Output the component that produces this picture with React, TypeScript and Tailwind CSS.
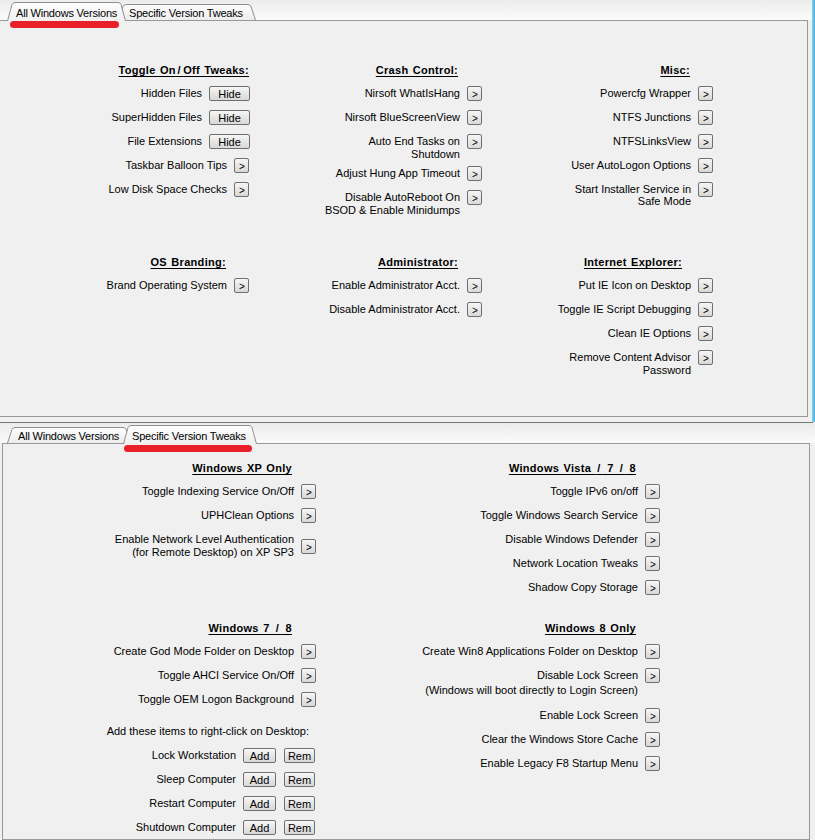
import type { ReactNode } from "react";

type Btn = "arrow" | "hide" | "addrem" | "none";

interface Item {
  lines: string[];
  btn: Btn;
  h?: string;
  lead?: string;
  textPt?: string;
  btnPt?: string;
  mr?: string;
}

const FONT = "font-['Liberation_Sans',Arial,sans-serif]";

const btnBase =
  "shrink-0 h-[15px] rounded-[2px] border border-[#707070] bg-linear-to-b from-[#f6f6f6] to-[#d8d8d8] text-[11px] leading-[13px] text-black p-0";

function ArrowBtn() {
  return (
    <button className={`${btnBase} w-[15px] flex items-center justify-center`}>
      <span className="text-[10px] leading-none pt-[2px] pl-px">&gt;</span>
    </button>
  );
}

function TextBtn({ label, w }: { label: string; w: string }) {
  return <button className={`${btnBase} ${w} pt-px`}>{label}</button>;
}

function Row({ item }: { item: Item }) {
  const { lines, btn, h = "h-[24px]", lead = "leading-[13px]", textPt = "pt-[5px]", btnPt = "pt-[4px]", mr = "" } = item;
  return (
    <div className={`flex justify-end items-start ${h} ${mr}`}>
      <div className={`text-right whitespace-nowrap ${lead} ${textPt}`}>
        {lines.map((l) => (
          <div key={l}>{l}</div>
        ))}
      </div>
      {btn !== "none" && (
        <div className={`flex gap-[8px] ml-[7px] ${btnPt}`}>
          {btn === "arrow" && <ArrowBtn />}
          {btn === "hide" && <TextBtn label="Hide" w="w-[41px]" />}
          {btn === "addrem" && (
            <>
              <TextBtn label="Add" w="w-[33px]" />
              <TextBtn label="Rem" w="w-[31px]" />
            </>
          )}
        </div>
      )}
    </div>
  );
}

// the bold headings in the original use a wider face: widen spaces and slashes a bit
function Title({ text }: { text: string }) {
  const parts = text.split("/");
  return (
    <span className="font-bold underline underline-offset-2 tracking-[0.3px] [word-spacing:1px]">
      {parts.map((p, i) => (
        <span key={i}>
          {i > 0 && <span className="tracking-[0.8px]">{"\u200A/\u200A"}</span>}
          {p}
        </span>
      ))}
    </span>
  );
}

function Section({ title, titleMr, items }: { title: string; titleMr: string; items: Item[] }) {
  return (
    <div className="flex flex-col">
      <div className={`h-[24px] leading-[24px] text-right whitespace-nowrap ${titleMr}`}>
        <Title text={title} />
      </div>
      {items.map((it) => (
        <Row key={it.lines.join("|")} item={it} />
      ))}
    </div>
  );
}

const a = (text: string, extra: Partial<Item> = {}): Item => ({ lines: [text], btn: "arrow", ...extra });

function tabPath(w: number, h: number) {
  return `M0.5 ${h} L5 2.5 Q6 0.5 8 0.5 L${w - 8} 0.5 Q${w - 6} 0.5 ${w - 5} 2.5 L${w - 0.5} ${h}`;
}

function Tab({ label, active, w, wClass, id }: { label: string; active: boolean; w: number; wClass: string; id: string }) {
  const h = active ? 19 : 16;
  return (
    <div className={`relative shrink-0 ${wClass} ${active ? "z-10 h-[19px] -mb-px pl-[9px] pt-[3px]" : "h-[16px] pl-[11px] pt-[1px]"}`}>
      <svg className="absolute left-0 top-0" width={w} height={h}>
        <defs>
          <linearGradient id={id} x1="0" y1="0" x2="0" y2="1">
            <stop offset="0" stopColor="#fdfdfd" />
            <stop offset="1" stopColor={active ? "#f0f0f0" : "#ededed"} />
          </linearGradient>
        </defs>
        <path d={tabPath(w, h)} fill={`url(#${id})`} stroke="#8f8f8f" strokeWidth="1" />
      </svg>
      <span className="relative whitespace-nowrap leading-[13px] tracking-[-0.2px]">{label}</span>
    </div>
  );
}

function TabStrip({ children }: { children: ReactNode }) {
  return <div className="h-[20px] flex items-end bg-linear-to-b from-[#ececec] to-[#fbfbfb]">{children}</div>;
}

export default function App() {
  return (
    <div className={`relative w-[815px] h-[840px] overflow-hidden bg-[#f0f0f0] text-[11px] text-black ${FONT}`}>
      {/* first capture: all versions */}
      <div className="flex">
        <div className="w-[812px]">
          <TabStrip>
            <div className="ml-[7px] flex items-end">
              <Tab id="t1" label="All Windows Versions" active w={119} wClass="w-[119px]" />
              <div className="-ml-[8px]">
                <Tab id="t2" label="Specific Version Tweaks" active={false} w={138} wClass="w-[138px]" />
              </div>
            </div>
          </TabStrip>
          <div className="w-[808px] h-[397px] border-t border-r border-b border-[#999999] bg-[#f0f0f0] pt-[37px]">
            <div className="grid grid-cols-[249px_233px_231px] h-[192px]">
              <Section
                title="Toggle On/Off Tweaks:"
                titleMr="mr-0"
                items={[
                  { lines: ["Hidden Files"], btn: "hide", mr: "-mr-px" },
                  { lines: ["SuperHidden Files"], btn: "hide", mr: "-mr-px" },
                  { lines: ["File Extensions"], btn: "hide", mr: "-mr-px" },
                  a("Taskbar Balloon Tips"),
                  a("Low Disk Space Checks"),
                ]}
              />
              <Section
                title="Crash Control:"
                titleMr="mr-[24px]"
                items={[
                  a("Nirsoft WhatIsHang"),
                  a("Nirsoft BlueScreenView"),
                  { lines: ["Auto End Tasks on", "Shutdown"], btn: "arrow", h: "h-[32px]" },
                  a("Adjust Hung App Timeout"),
                  { lines: ["Disable AutoReboot On", "BSOD & Enable Minidumps"], btn: "arrow", h: "h-[32px]" },
                ]}
              />
              <Section
                title="Misc:"
                titleMr="mr-[23px]"
                items={[
                  a("Powercfg Wrapper"),
                  a("NTFS Junctions"),
                  a("NTFSLinksView"),
                  a("User AutoLogon Options"),
                  { lines: ["Start Installer Service in", "Safe Mode"], btn: "arrow", lead: "leading-[12px]" },
                ]}
              />
            </div>
            <div className="grid grid-cols-[249px_233px_231px]">
              <Section title="OS Branding:" titleMr="mr-[23px]" items={[a("Brand Operating System")]} />
              <Section
                title="Administrator:"
                titleMr="mr-[24px]"
                items={[a("Enable Administrator Acct."), a("Disable Administrator Acct.")]}
              />
              <Section
                title="Internet Explorer:"
                titleMr="mr-[31px]"
                items={[
                  a("Put IE Icon on Desktop"),
                  a("Toggle IE Script Debugging"),
                  a("Clean IE Options"),
                  { lines: ["Remove Content Advisor", "Password"], btn: "arrow", h: "h-[32px]" },
                ]}
              />
            </div>
          </div>
          <div className="h-[5px]" />
        </div>
        <div className="w-[3px] bg-linear-to-r from-[#7fd0ee] to-[#45b3df]" />
      </div>
      <div className="h-px w-[813px] bg-[#767676]" />

      {/* second capture: specific versions */}
      <TabStrip>
        <div className="ml-[7px] flex items-end">
          <Tab id="t3" label="All Windows Versions" active={false} w={124} wClass="w-[124px]" />
          <div className="-ml-[8px] z-10 flex items-end">
            <Tab id="t4" label="Specific Version Tweaks" active w={134} wClass="w-[134px]" />
          </div>
        </div>
      </TabStrip>
      <div className="ml-[2px] w-[808px] h-[397px] border border-[#999999] bg-[#f0f0f0] pt-[12px]">
        <div className="grid grid-cols-[313px_344px] h-[160px]">
          <Section
            title="Windows XP Only"
            titleMr="mr-[24px]"
            items={[
              a("Toggle Indexing Service On/Off"),
              a("UPHClean Options"),
              {
                lines: ["Enable Network Level Authentication", "(for Remote Desktop) on XP SP3"],
                btn: "arrow",
                h: "h-[32px]",
                btnPt: "pt-[11px]",
              },
            ]}
          />
          <Section
            title="Windows Vista / 7 / 8"
            titleMr="mr-[24px]"
            items={[
              a("Toggle IPv6 on/off"),
              a("Toggle Windows Search Service"),
              a("Disable Windows Defender"),
              a("Network Location Tweaks"),
              a("Shadow Copy Storage"),
            ]}
          />
        </div>
        <div className="grid grid-cols-[313px_344px]">
          <Section
            title="Windows 7 / 8"
            titleMr="mr-[24px]"
            items={[
              a("Create God Mode Folder on Desktop"),
              a("Toggle AHCI Service On/Off"),
              a("Toggle OEM Logon Background", { h: "h-[32px]" }),
              { lines: ["Add these items to right-click on Desktop:"], btn: "none", mr: "mr-[7px]" },
              { lines: ["Lock Workstation"], btn: "addrem", mr: "mr-px" },
              { lines: ["Sleep Computer"], btn: "addrem", mr: "mr-px" },
              { lines: ["Restart Computer"], btn: "addrem", mr: "mr-px" },
              { lines: ["Shutdown Computer"], btn: "addrem", mr: "mr-px" },
            ]}
          />
          <Section
            title="Windows 8 Only"
            titleMr="mr-[24px]"
            items={[
              a("Create Win8 Applications Folder on Desktop"),
              {
                lines: ["Disable Lock Screen", "(Windows will boot directly to Login Screen)"],
                btn: "arrow",
                h: "h-[40px]",
                lead: "leading-[15px]",
                textPt: "pt-[4px]",
              },
              a("Enable Lock Screen"),
              a("Clear the Windows Store Cache"),
              a("Enable Legacy F8 Startup Menu"),
            ]}
          />
        </div>
      </div>

      {/* red marks over the active tabs */}
      <div className="absolute left-[10px] top-[21px] w-[109px] h-[7px] rounded-full bg-[#e8202a]" />
      <div className="absolute left-[124px] top-[445px] w-[128px] h-[7px] rounded-full bg-[#e8202a]" />
    </div>
  );
}
